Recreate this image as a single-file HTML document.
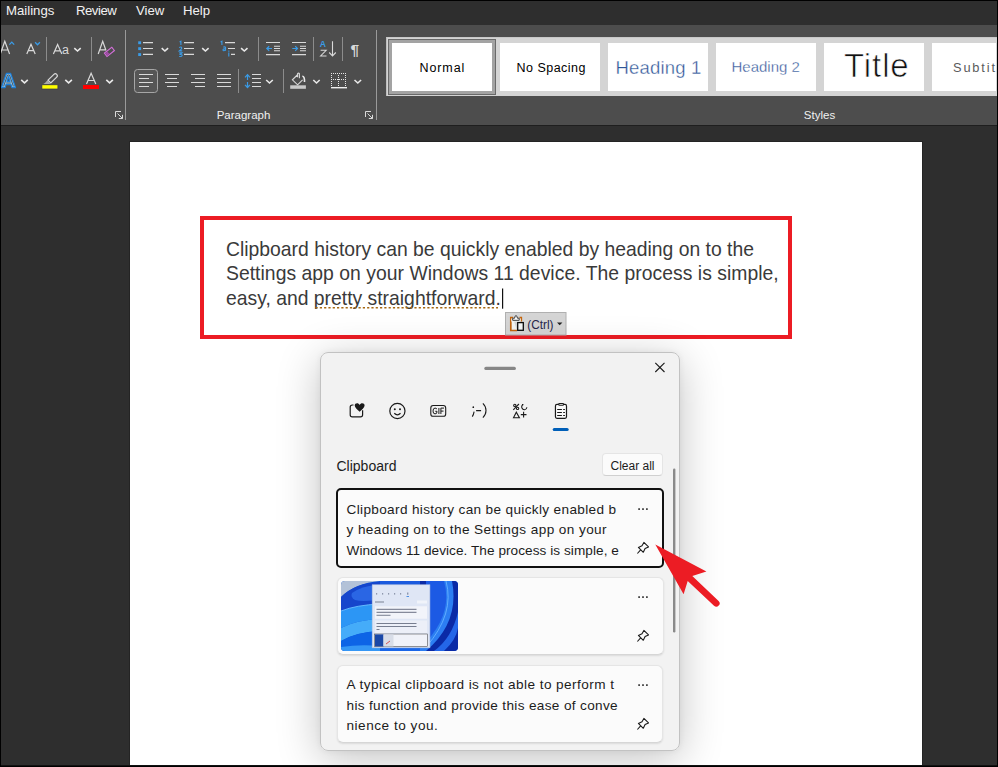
<!DOCTYPE html>
<html><head><meta charset="utf-8">
<style>
*{margin:0;padding:0;box-sizing:border-box}
html,body{width:998px;height:767px;overflow:hidden;background:#2e2e2e;font-family:"Liberation Sans",sans-serif;position:relative}
.abs{position:absolute}
#menubar{left:0;top:0;width:998px;height:25px;background:#2e2e2e}
#menubar span{position:absolute;top:2.7px;color:#f2f2f2;font-size:13.2px;line-height:15px}
#ribbon{left:0;top:25px;width:998px;height:100px;background:#4d4d4d}
#ribbonbottom{left:0;top:125px;width:998px;height:1px;background:#1e1e1e}
#gallery{left:386px;top:37px;width:612px;height:59px;background:#d4d4d4;border-top:1px solid #c8c8c8;border-left:1px solid #bdbdbd}
.sty{position:absolute;top:43px;width:100px;height:48px;background:#fff;overflow:hidden;white-space:nowrap;text-align:center}
#normalframe{left:388px;top:39px;width:108px;height:56px;border:1px solid #6a6a6a;background:#a3a3a3}
#page{left:130px;top:142px;width:792px;height:640px;background:#fff;box-shadow:0 0 0 1px #242424}
#redbox{left:200px;top:216px;width:592px;height:123px;border:4px solid #ec1c24}
.doctext{left:226px;color:#3a3a3a;font-size:19.35px;white-space:nowrap;line-height:22px}
#frame{left:0;top:0;width:998px;height:767px;border:1px solid #000;pointer-events:none}
#bline{left:0;top:765px;width:998px;height:1px;background:#121212}
</style></head>
<body>
<div id="menubar" class="abs">
  <span style="left:6px">Mailings</span>
  <span style="left:76px;letter-spacing:-0.5px">Review</span>
  <span style="left:136px">View</span>
  <span style="left:183px">Help</span>
</div>
<div id="ribbon" class="abs"></div>
<div id="ribbonbottom" class="abs"></div>
<div id="gallery" class="abs"></div>
<div id="normalframe" class="abs"></div>
<div class="sty" style="left:392px"><span style="position:absolute;left:27.5px;top:17.5px;font-size:12.5px;letter-spacing:0.9px;color:#000">Normal</span></div>
<div class="sty" style="left:500px"><span style="position:absolute;left:16.5px;top:17.5px;font-size:12.5px;letter-spacing:0.48px;color:#000">No Spacing</span></div>
<div class="sty" style="left:608px"><span style="position:absolute;left:7.5px;top:14.2px;font-size:18.5px;letter-spacing:0.19px;color:#2f5597;-webkit-text-stroke:0.35px #fff">Heading 1</span></div>
<div class="sty" style="left:716px"><span style="position:absolute;left:15.5px;top:14.8px;font-size:15px;color:#2f5597;-webkit-text-stroke:0.3px #fff">Heading 2</span></div>
<div class="sty" style="left:824px"><span style="position:absolute;left:20px;top:4.4px;font-size:33px;letter-spacing:0.9px;color:#111;-webkit-text-stroke:0.7px #fff">Title</span></div>
<div class="sty" style="left:932px;width:64px"><span style="position:absolute;left:21px;top:17px;font-size:12.8px;color:#5a5a5a;letter-spacing:1.85px">Subtitle</span></div>
<svg class="abs" style="left:0;top:0" width="998" height="130" viewBox="0 0 998 130">
<g fill="none" stroke="#d9d9d9" stroke-width="1.2" stroke-linecap="butt" stroke-linejoin="miter">
 <!-- grow A -->
 <path d="M0.3,54 L4.8,41.2 L9.6,54 M1.7,50 L8.1,50"/>
 <path d="M26.8,54 L31,44.3 L35.2,54 M28.2,50.7 L33.8,50.7"/>
 <!-- Aa -->
 <path d="M53.4,54 L57.6,44.4 L61.8,54 M54.9,50.8 L60.3,50.8"/>
 <!-- clear formatting A -->
 <path d="M98.2,54 L102.7,41.3 L106,50.5 M99.8,49.8 L105.3,49.8"/>
 <!-- chevrons -->
 <path stroke-width="1.6" stroke="#e8e8e8" d="M74.3,48.1 L77.5,51 L80.7,48.1"/>
 <path stroke-width="1.6" stroke="#e8e8e8" d="M161.7,48.1 L164.9,51 L168.1,48.1"/>
 <path stroke-width="1.6" stroke="#e8e8e8" d="M202.2,48.1 L205.4,51 L208.6,48.1"/>
 <path stroke-width="1.6" stroke="#e8e8e8" d="M241.1,48.1 L244.3,51 L247.5,48.1"/>
 <path stroke-width="1.6" stroke="#e8e8e8" d="M21.2,79.8 L24.5,82.9 L27.8,79.8"/>
 <path stroke-width="1.6" stroke="#e8e8e8" d="M65.3,79.8 L68.6,82.9 L71.9,79.8"/>
 <path stroke-width="1.6" stroke="#e8e8e8" d="M106.3,79.8 L109.6,82.9 L112.9,79.8"/>
 <path stroke-width="1.6" stroke="#e8e8e8" d="M266.2,80 L269.5,83 L272.8,80"/>
 <path stroke-width="1.6" stroke="#e8e8e8" d="M313.3,80 L316.5,83 L319.7,80"/>
 <path stroke-width="1.6" stroke="#e8e8e8" d="M354.5,80 L357.8,83 L361.1,80"/>
 <!-- font color A -->
 <path d="M86.5,84 L91.1,73.2 L95.8,84 M88.1,80.5 L94.2,80.5"/>
 <!-- highlighter -->
 <path d="M48,80.2 L53.9,74.3 Q55.3,72.9 56.7,74.3 Q58.1,75.7 56.7,77.1 L50.8,83 Z"/>
 <!-- bullet lines -->
 <path stroke-width="1.1" d="M143,42.6 H153 M143,48.5 H153 M143,54.4 H153 M184,42.6 H194 M184,48.5 H194 M184,54.4 H194 M225,42.6 H235 M228,48.5 H235 M231,54.4 H235"/>
 <!-- align lines -->
 <path stroke-width="1.1" d="M139,74.5 H153 M139,78.5 H149 M139,82.5 H153 M139,86.5 H149"/>
 <path stroke-width="1.1" d="M165,74.5 H179 M167,78.5 H177 M165,82.5 H179 M167,86.5 H177"/>
 <path stroke-width="1.1" d="M191,74.5 H205 M195,78.5 H205 M191,82.5 H205 M195,86.5 H205"/>
 <path stroke-width="1.1" d="M217,74.5 H231 M217,78.5 H231 M217,82.5 H231 M217,86.5 H231"/>
 <!-- indent -->
 <path stroke-width="1.1" d="M266,42.5 H280 M274,46.3 H280 M274,48.5 H280 M274,50.7 H280 M266,54.6 H280"/>
 <path stroke-width="1.1" d="M292,42.5 H306 M300,46.3 H306 M300,48.5 H306 M300,50.7 H306 M292,54.6 H306"/>
 <!-- sort Z and arrow -->
 <path stroke-width="1.05" d="M320.6,50.3 H326.2 L320.6,56 H326.5"/>
 <path stroke-width="1.1" d="M332.5,41.2 V56 M329.2,52.5 L332.5,56 L335.8,52.5"/>
 <!-- line spacing lines -->
 <path stroke-width="1.1" d="M252,74.5 H261 M252,78.5 H261 M252,82.5 H261 M252,86.5 H261"/>
 <!-- bucket -->
 <path stroke-width="1.1" d="M297.3,75 L292.4,79.8 L297.6,84.8 L302.6,79.9 M297.6,77.2 V73.6 Q298.5,72.6 299.4,73.6 V78.2"/>
 <!-- dialog launchers -->
 <path stroke-width="1" d="M115.5,117 V111.5 H121 M117.5,113.5 L122.5,118.5 M122.5,114.8 V118.5 H118.8"/>
 <path stroke-width="1" d="M365.5,117 V111.5 H371 M367.5,113.5 L372.5,118.5 M372.5,114.8 V118.5 H368.8"/>
</g>
<!-- blue parts -->
<g fill="none" stroke="#3a9be6" stroke-width="1.3">
 <path d="M9.4,44.6 L11.8,42.1 L14.2,44.6"/>
 <path d="M35.1,42.2 L37.5,44.7 L39.9,42.2"/>
 <path stroke-width="1.2" d="M272,48.5 H267 M269.2,46.2 L266.8,48.5 L269.2,50.8"/>
 <path stroke-width="1.2" d="M292.3,48.5 H297.5 M295.2,46.2 L297.5,48.5 L295.2,50.8"/>
 <path stroke-width="1.2" d="M247.5,74.8 V80 M247.5,82 V87.3 M245,77.3 L247.5,74.6 L250,77.3 M245,84.8 L247.5,87.5 L250,84.8"/>
 <path stroke-width="1.6" stroke="#e8e8e8" d="M302.3,76.3 Q304.8,76.2 304.5,82"/>
</g>
<g fill="#3a9be6">
 <rect x="138.2" y="41.3" width="2.9" height="2.9"/><rect x="138.2" y="47.2" width="2.9" height="2.9"/><rect x="138.2" y="53.1" width="2.9" height="2.9"/>
</g>
<g fill="none" stroke="#3a9be6" stroke-width="1.1" stroke-linecap="butt">
 <path d="M179.6,42 L180.9,41.2 V45"/>
 <path d="M179.2,47.6 Q180.4,46.6 181.5,47.3 Q182.2,48.3 181,49.3 L179.2,50.9 H182.2"/>
 <path d="M179.2,52.9 H182 L180.3,54.4 Q182.3,54.4 182.2,55.5 Q182,56.8 179.2,56.5"/>
 <path d="M220.6,42 L221.9,41.2 V45"/>
 <path d="M223.3,47.3 Q224.5,46.5 225.5,47.3 V50.8 M225.5,48.9 Q223,48.6 223,50 Q223.3,51.2 225.5,50.3"/>
 <path d="M228.8,52.6 V56.6"/>
</g>
<g fill="#3a9be6"><rect x="228.2" y="50.6" width="1.2" height="1.1"/>
 <text x="319.8" y="47.4" font-family="Liberation Sans" font-weight="bold" font-size="8.6">A</text>
</g>
<text x="62" y="54" font-family="Liberation Sans" font-size="12.5" fill="#d9d9d9">a</text>
<!-- pilcrow -->
<text x="350.6" y="55.3" font-family="Liberation Sans" font-weight="bold" font-size="15.5" fill="#d9d9d9">¶</text>
<!-- eraser -->
<g transform="translate(109.4,51.9) rotate(-38)">
 <rect x="-4.7" y="-2.1" width="9.4" height="4.2" fill="none" stroke="#d46fd9" stroke-width="1.1"/>
 <rect x="-4.2" y="-1.6" width="3" height="3.2" fill="#a04ca8"/>
</g>
<!-- text effect A -->
<path d="M1.5,87.6 L6.4,73.4 H10.6 L15.5,87.6 H11.9 L11,84.6 H6 L5.1,87.6 Z M7,81.3 H10 L8.5,76.6 Z" fill="#8fcaf3" stroke="#1f7fd6" stroke-width="1.3" stroke-linejoin="round"/>
<path d="M3.6,86.4 L7.5,75 H9.5 L13.4,86.4" fill="none" stroke="#3a3a3a" stroke-width="0.8"/>
<path d="M6.2,83 H10.8" fill="none" stroke="#3a3a3a" stroke-width="0.8"/>
<!-- highlighter bar -->
<rect x="41.9" y="84.8" width="16" height="4.2" fill="#ffff00" stroke="#34344e" stroke-width="0.7"/>
<path d="M47.6,80.6 L50.4,83.4 L49.3,84 H43.3 Q45.5,83 46.5,81.2 Z" fill="#a8a8a8"/>
<!-- font color bar -->
<rect x="83" y="85" width="16" height="4" fill="#ff0000"/>
<!-- bucket bar -->
<rect x="290.2" y="85.3" width="15.7" height="3.5" fill="#c8c8c8"/>
<!-- borders grid -->
<g fill="#e8e8e8" shape-rendering="crispEdges"><rect x="331" y="73" width="1" height="1"/><rect x="333" y="73" width="1" height="1"/><rect x="333" y="79" width="1" height="1"/><rect x="335" y="73" width="1" height="1"/><rect x="335" y="79" width="1" height="1"/><rect x="337" y="73" width="1" height="1"/><rect x="337" y="79" width="1" height="1"/><rect x="339" y="73" width="1" height="1"/><rect x="339" y="79" width="1" height="1"/><rect x="341" y="73" width="1" height="1"/><rect x="341" y="79" width="1" height="1"/><rect x="343" y="73" width="1" height="1"/><rect x="343" y="79" width="1" height="1"/><rect x="345" y="73" width="1" height="1"/><rect x="331" y="75" width="1" height="1"/><rect x="338" y="75" width="1" height="1"/><rect x="345" y="75" width="1" height="1"/><rect x="331" y="77" width="1" height="1"/><rect x="338" y="77" width="1" height="1"/><rect x="345" y="77" width="1" height="1"/><rect x="331" y="79" width="1" height="1"/><rect x="338" y="79" width="1" height="1"/><rect x="345" y="79" width="1" height="1"/><rect x="331" y="81" width="1" height="1"/><rect x="338" y="81" width="1" height="1"/><rect x="345" y="81" width="1" height="1"/><rect x="331" y="83" width="1" height="1"/><rect x="338" y="83" width="1" height="1"/><rect x="345" y="83" width="1" height="1"/><rect x="331" y="85" width="1" height="1"/><rect x="338" y="85" width="1" height="1"/><rect x="345" y="85" width="1" height="1"/></g>
<rect x="331" y="87" width="16" height="1.4" fill="#f0f0f0"/>
<!-- separators -->
<g stroke="#8c8c8c" stroke-width="1">
 <path d="M46.5,37 V61 M91.5,37 V61 M258.5,37 V61 M313.5,37 V61 M342.5,37 V61 M238.5,69 V93 M283.5,69 V93"/>
 <path stroke="#9a9a9a" d="M125.5,30 V120 M376.5,30 V120"/>
</g>
<!-- align left selected box -->
<rect x="134.5" y="69.5" width="23" height="23" rx="3" fill="rgba(255,255,255,0.05)" stroke="#a6a6a6" stroke-width="1"/>
<text x="243.5" y="119" font-family="Liberation Sans" font-size="11.5" fill="#f0f0f0" text-anchor="middle">Paragraph</text>
<text x="819.5" y="119" font-family="Liberation Sans" font-size="11.5" fill="#f0f0f0" text-anchor="middle">Styles</text>
</svg>
<div id="page" class="abs"></div>
<div id="redbox" class="abs"></div>
<div class="abs doctext" style="top:238.4px">Clipboard history can be quickly enabled by heading on to the</div>
<div class="abs doctext" style="top:262.4px;letter-spacing:0.03px">Settings app on your Windows 11 device. The process is simple,</div>
<div class="abs doctext" style="top:287.4px">easy, and pretty straightforward.</div>
<svg class="abs" style="left:0;top:0" width="998" height="767" viewBox="0 0 998 767">
 <path d="M315.5,307.8 H498" stroke="#a66812" stroke-width="1.6" stroke-dasharray="2.2,2.1"/>
 <rect x="502" y="288.5" width="1.2" height="20.2" fill="#111"/>
 <rect x="505.5" y="312.5" width="60.5" height="22.5" fill="#d5d5d5" stroke="#b0b0b0" stroke-width="1"/>
 <path d="M513,317.7 H510.8 V330.5 H517" fill="#f2f5f5" stroke="#c4660f" stroke-width="1.7"/>
 <path d="M519.5,317.7 H521.3 V321.5" fill="none" stroke="#c4660f" stroke-width="1.7"/>
 <rect x="511.3" y="318.4" width="9.4" height="3.2" fill="#f2f5f5"/>
 <path d="M512.7,320.3 V318.2 H514.6 Q514.8,315.6 516,315.6 Q517.2,315.6 517.4,318.2 H519.2 V320.3 Z" fill="#fff" stroke="#3a3a3a" stroke-width="1"/>
 <rect x="517.7" y="322.6" width="5.6" height="7.7" fill="#f6f8f8" stroke="#0a0a0a" stroke-width="1.3"/>
 <text x="527.3" y="328.6" font-family="Liberation Sans" font-size="12" fill="#26264a" textLength="26.2" lengthAdjust="spacingAndGlyphs">(Ctrl)</text>
 <path d="M557,322.4 H562.4 L559.7,325.2 Z" fill="#222"/>
</svg>
<style>
#pshadow{left:320px;top:352px;width:360px;height:399px;border-radius:8px;box-shadow:0 8px 44px rgba(0,0,0,0.24),0 0 6px rgba(0,0,0,0.06)}
#panel{left:320px;top:352px;width:360px;height:399px;border-radius:8px;background:#f2f2f2;border:1px solid #c2c2c2;overflow:hidden}
.card{position:absolute;background:#fbfbfb;border-radius:6px;border:1px solid #e5e5e5;border-bottom-color:#d6d6d6;box-shadow:0 1px 2px rgba(0,0,0,0.10)}
.ct{position:absolute;left:10px;font-size:13.6px;color:#1c1c1c;white-space:nowrap;line-height:16px}
</style>
<div id="pshadow" class="abs"></div>
<div id="panel" class="abs"></div>
<svg class="abs" style="left:0;top:0" width="998" height="767" viewBox="0 0 998 767">
 <rect x="484.3" y="366.8" width="31.6" height="3.2" rx="1.6" fill="#868686"/>
 <path d="M655.3,362.8 L664.5,372 M664.5,362.8 L655.3,372" stroke="#1a1a1a" stroke-width="1.1" fill="none"/>
 <!-- tab icons -->
 <g fill="none" stroke="#1a1a1a" stroke-width="1.2">
  <path d="M353.5,405 H352.3 Q350.2,405 350.2,407.1 V414.7 Q350.2,416.8 352.3,416.8 H360.5 Q362.6,416.8 362.6,414.7 V410.2"/>
  <circle cx="397.4" cy="411" r="7.6"/>
  <path d="M394.3,413.3 Q397.4,416.3 400.5,413.3"/>
  <rect x="430.8" y="405.5" width="14.9" height="10.8" rx="2.4" stroke-width="1.1"/>
  <path stroke-width="1" d="M437,409.1 Q436.3,408.1 435,408.1 Q433,408.1 433,411 Q433,413.9 435,413.9 Q437,413.9 437,411.9 V411.3 H435.3 M438.9,408 V414 M444,408.1 H440.9 V414 M440.9,411.1 H443.5"/>
  <path stroke-width="1.1" d="M474.1,411.6 Q473.6,414.5 472.3,416.6 M476.1,410.6 H481.1 M482.9,403.4 C485.4,405.8 486,408 486,410.5 C486,413 485.4,415.2 482.9,417.6"/>
  <path d="M557,404.45 H565 Q566.5,404.45 566.5,406 V416.8 Q566.5,418.35 565,418.35 H557 Q555.45,418.35 555.45,416.8 V406 Q555.45,404.45 557,404.45 Z" fill="#fafafa"/>
  <path stroke-width="1.1" d="M559.6,403.5 H562.6 Q563.6,403.5 563.6,404.4 Q563.6,405.3 562.6,405.3 H559.6 Q558.7,405.3 558.7,404.4 Q558.7,403.5 559.6,403.5 Z" fill="#fafafa"/>
  <path stroke-width="1.1" stroke-linecap="round" d="M557.6,409.5 H561.5 M557.6,412.5 H561.5 M557.6,415.5 H561.5 M563.6,409.5 H564.5 M563.6,412.5 H564.5 M563.6,415.5 H564.5"/>
 </g>
 <path d="M359.65,404.9 C358.6,402.4 354.7,402.6 354.7,405.6 C354.7,407.8 357.6,409.8 359.65,411.8 C361.7,409.8 364.6,407.8 364.6,405.6 C364.6,402.6 360.7,402.4 359.65,404.9 Z" fill="#1a1a1a"/>
 <circle cx="394.8" cy="409.3" r="1" fill="#1a1a1a"/><circle cx="400" cy="409.3" r="1" fill="#1a1a1a"/>
 <circle cx="473.3" cy="407.2" r="0.85" fill="#1a1a1a"/>
 <g fill="none" stroke="#1a1a1a" stroke-width="1.1">
  <circle cx="514.8" cy="405.4" r="1.15"/><circle cx="517.6" cy="408.4" r="1.15"/>
  <path d="M513.3,409.8 L518.9,404"/>
  <path d="M522.6,404.6 Q521.3,406 521.8,407.8 Q522.8,409.9 524.6,409.7 Q526.6,409.4 526.9,407.2"/>
  <path d="M513.5,417.7 L516.3,412.2 L519.4,417.7 Z"/>
  <path d="M520.8,414.6 H526.5 M523.6,411.7 V417.6"/>
 </g>
 <rect x="522" y="404" width="1.4" height="1.2" fill="#1a1a1a"/>
 <rect x="552.7" y="428" width="16" height="3" rx="1.5" fill="#005fb8"/>
 <!-- scrollbar -->
 <rect x="673" y="468.5" width="2.4" height="164" rx="1.2" fill="#8a8a8a"/>
</svg>
<div class="abs" style="left:336.5px;top:458px;font-size:14px;color:#1c1c1c;line-height:16px">Clipboard</div>
<div class="abs" style="left:601.8px;top:453px;width:61.5px;height:22.5px;border-radius:4px;background:#fbfbfb;border:1px solid #e5e5e5;border-bottom-color:#d0d0d0"></div>
<div class="abs" style="left:610.5px;top:458.5px;font-size:12px;color:#1c1c1c;line-height:14px">Clear all</div>

<div class="card" style="left:336px;top:488px;width:328px;height:80px;border:2px solid #111;border-radius:5px;box-shadow:none">
</div>
<div class="abs ct" style="left:346.5px;top:502px;letter-spacing:0.346px">Clipboard history can be quickly enabled b</div>
<div class="abs ct" style="left:346.5px;top:522px;letter-spacing:0.41px">y heading on to the Settings app on your</div>
<div class="abs ct" style="left:346.5px;top:542.5px;letter-spacing:0.057px">Windows 11 device. The process is simple, e</div>

<div class="card" style="left:337px;top:577px;width:327px;height:78px"></div>
<div class="card" style="left:337px;top:665px;width:326px;height:78px"></div>
<div class="abs ct" style="left:346.5px;top:676.6px;letter-spacing:0.44px">A typical clipboard is not able to perform t</div>
<div class="abs ct" style="left:346.5px;top:697.6px;letter-spacing:0.338px">his function and provide this ease of conve</div>
<div class="abs ct" style="left:346.5px;top:717.8px;letter-spacing:0.515px">nience to you.</div>

<svg class="abs" style="left:0;top:0" width="998" height="767" viewBox="0 0 998 767">
 <g fill="#1a1a1a">
  <rect x="638.3" y="508.3" width="1.6" height="1.6"/><rect x="642.2" y="508.3" width="1.6" height="1.6"/><rect x="646.1" y="508.3" width="1.6" height="1.6"/>
  <rect x="638.3" y="596.3" width="1.6" height="1.6"/><rect x="642.2" y="596.3" width="1.6" height="1.6"/><rect x="646.1" y="596.3" width="1.6" height="1.6"/>
  <rect x="638.3" y="684.3" width="1.6" height="1.6"/><rect x="642.2" y="684.3" width="1.6" height="1.6"/><rect x="646.1" y="684.3" width="1.6" height="1.6"/>
 </g>
 <g fill="none" stroke="#1a1a1a" stroke-width="1.1" stroke-linejoin="round">
  <g id="pin"><path d="M643.9,542.4 L648.5,546.9 L645.1,548.6 L643.3,552.3 L638.4,547.4 L642,545.8 Z M640.4,550.2 L637.4,553.5"/></g>
  <use href="#pin" transform="translate(0,88)"/>
  <use href="#pin" transform="translate(0,176)"/>
 </g>
 <!-- thumbnail -->
 <defs>
  <linearGradient id="bg1" x1="0" y1="0" x2="1" y2="1">
   <stop offset="0" stop-color="#6fa3e0"/><stop offset="0.45" stop-color="#1f6fe8"/><stop offset="1" stop-color="#0a3fbf"/>
  </linearGradient>
  <clipPath id="thclip"><rect x="341" y="581" width="117" height="70" rx="4"/></clipPath>
 </defs>
 <g clip-path="url(#thclip)">
  <rect x="341" y="581" width="117" height="70" fill="#0c50d8"/>
  <path d="M341,581 H380 Q355,583 341,597 Z" fill="#b3c2d8"/>
  <path d="M341,597 Q355,583 380,582 V604 Q356,605 341,611 Z" fill="#1646cc"/>
  <path d="M352,593 Q362,586 376,585 V600 Q362,602 355,600 Q350,597 352,593 Z" fill="#2a66e4"/>
  <path d="M341,611 Q356,605 380,604 V619 Q356,620 341,628 Z" fill="#2c96f5"/>
  <path d="M341,611 Q356,605 380,604" stroke="#6cc0ff" stroke-width="0.9" fill="none"/>
  <path d="M341,628 Q356,620 380,619 V631 Q356,632 341,641 Z" fill="#45acf9"/>
  <path d="M341,641 Q356,632 380,631 V651 H341 Z" fill="#0d64e6"/>
  <path d="M341,647 Q360,644 380,646 V651 H341 Z" fill="#3597f5"/>
  <path d="M420,581 H458 V651 H420 Z" fill="#0a2aa6"/>
  <path d="M426,581 H446 Q454,612 426,645 Z" fill="#1c5ae4"/>
  <path d="M444,581 H452 Q460,622 426,651 H420 V648 Q454,616 444,581 Z" fill="#2c7ef2"/>
  <path d="M446,581 Q455,614 426,647" stroke="#66b2ff" stroke-width="0.9" fill="none"/>
  <path d="M458,612 Q452,638 434,651 H444 Q456,640 458,628 Z" fill="#2466e8"/>
  <path d="M380,581 H420 V586 H380 Z" fill="#1a5ade"/>
  <path d="M380,646 H420 V651 H380 Z" fill="#1a66e8"/>
  <rect x="372.2" y="584.8" width="57.7" height="63" fill="#dfe6f5"/>
  <rect x="372.2" y="584.8" width="57.7" height="63" fill="none" stroke="#bcc8e0" stroke-width="0.6"/>
  <g fill="#8f98ad"><rect x="376" y="593" width="1.2" height="1.6"/><rect x="382" y="593" width="1.2" height="1.6"/><rect x="388" y="593" width="1.2" height="1.6"/><rect x="394" y="593" width="1.2" height="1.6"/><rect x="400" y="593" width="1.2" height="1.6"/><rect x="407" y="592.5" width="1.4" height="2.2"/></g>
  <rect x="406.5" y="596" width="2.5" height="0.8" fill="#2a7be0"/>
  <rect x="375" y="601.5" width="9" height="1" fill="#7a8294"/>
  <rect x="417" y="600.5" width="10" height="3" fill="#f0f3fa"/>
  <rect x="375" y="606.3" width="52" height="12.4" fill="#f2f4fa"/>
  <rect x="375" y="620.5" width="52" height="12.5" fill="#eceff8"/>
  <rect x="374.6" y="634" width="52.8" height="12.6" fill="#f0f2f9" stroke="#333" stroke-width="0.5"/>
  <g fill="#6a7184">
   <rect x="376.5" y="608.8" width="40" height="1"/><rect x="376.5" y="611.8" width="40" height="1"/><rect x="376.5" y="614.8" width="14" height="0.9"/>
   <rect x="376.5" y="623" width="40" height="0.9"/><rect x="376.5" y="626" width="40" height="0.9"/><rect x="376.5" y="629" width="3" height="0.9"/>
  </g>
  <rect x="375" y="634.4" width="8.5" height="12" fill="#1a48a8"/>
  <rect x="383.5" y="634.4" width="10" height="12" fill="#d8dde8"/>
  <path d="M386,644 L390,641" stroke="#d03030" stroke-width="0.8"/>
 </g>
 <!-- arrow -->
 <path d="M655.3,544.6 L706.4,571.4 L692.3,576.1 L718.6,600.9 A3.3,3.3 0 0 1 714,605.7 L687.7,580.9 L683.6,594.2 Z" fill="#ec1c24"/>
</svg>
<div id="bline" class="abs"></div>
<div id="frame" class="abs"></div>
</body></html>
